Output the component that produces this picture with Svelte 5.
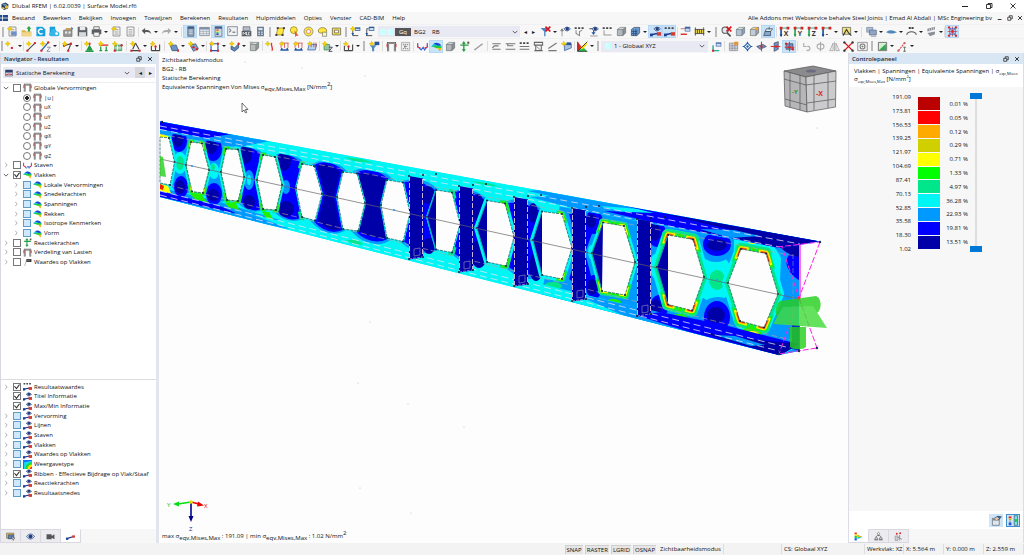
<script>
  const star = '<path d="M4 0l1.300 2.700L8 4 5.300 5.300 4 8 2.700 5.300 0 4l2.700-1.300z" fill="#f2d200" stroke="#c9a800" stroke-width=".4"/>';
  const redX = '<path d="M8 1l7 7M15 1L8 8" stroke="#d9141b" stroke-width="2.500"/>';
  const dots = (pts, c = '#d8262c') => pts.map(([x, y]) => `<circle cx="${x}" cy="${y}" r="1.700" fill="${c}"/>`).join('');
  const page = '<path d="M3 1.500h10v13H3z" fill="#fff" stroke="#666"/><path d="M5 5h6M5 7.500h6M5 10h6M5 12h6" stroke="#888"/>';
  const cube = (a, b, c) => `<path d="M2 5l4-3h8v8l-4 4H2z" fill="${a}"/><path d="M2 5h8v9H2z" fill="${b}"/><path d="M10 5l4-3v8l-4 4z" fill="${c}"/><path d="M2 5l4-3h8v8l-4 4H2zM2 5h8v9M10 5l4-3" fill="none" stroke="#566" stroke-width=".8"/>`;
  const frame = '<path d="M3 15V3h10v12" fill="none" stroke="#555" stroke-width="3"/><path d="M3 15V3h10v12" fill="none" stroke="#ddd"/><path d="M1.500 4v5M14.500 4v5" stroke="#d22" stroke-width="1.400"/>';
  const stress = '<path d="M0 8l5-5 6 1 5 4-4 2z" fill="#18c4ee"/><path d="M4 4c3-2 6-2 11 2l-5 1z" fill="#1a44d8"/><path d="M1 8c5-2 10-2 15 1l-3 2-5-1z" fill="#28c840"/><path d="M6 10h9l-1 2z" fill="#e8e800"/><path d="M10 11h5l-2 4z" fill="#f0a800"/>';
  const resultDot = '<path d="M0 14l5-2 6-1" stroke="#1a3f96" stroke-width="2.200" fill="none"/><path d="M0 11h4v4H0z" fill="#1a3f96"/><path d="M10 9h6v5h-6z" fill="#d73a2e"/>';
  const eye = '<path d="M6 4c2-3 6-3 9 0-3 4-7 4-9 0z" fill="#fff" stroke="#24417f" stroke-width="1.300"/><circle cx="10.500" cy="4" r="2.600" fill="#24417f"/>';
  const axes = (c, l) => `<path d="M3 14V3h11" stroke="#1db6a0" stroke-width="1.500" fill="none"/><path d="M3 15V4" stroke="${c}" stroke-width="2"/><path d="M1 1h4v4H1zM11 1h4v4h-4z" fill="#d22"/><path d="M1 12h4l-2 4z" fill="${c}"/><text x="7" y="15" font-size="10" font-weight="700" fill="#333">${l}</text>`;
  const load = '<path d="M2 4h12M8 4v7" stroke="#444" stroke-width="1.300"/><path d="M5 9h6l-3 4z" fill="#2458a8"/><path d="M3 14.500h11" stroke="#777"/>';
  const values = '<path d="M1 3h3M6 3h3M11 3h3" stroke="#444" stroke-width="2.600"/>';
  const grid = '<path d="M2 3h12v11H2z" fill="#bcd2ea" stroke="#456" /><path d="M2 7h12M2 10.500h12M6 3v11M10 3v11" stroke="#456"/>';

  const icons = {
    logo: '<path d="M1 4l8-3 6 4-1 8-8 3-5-4z" fill="#203a5f"/><path d="M2 5l6-2 5 3-6 2z" fill="#6f8fb5"/><circle cx="11" cy="10" r="3.500" fill="#e8b92d"/><path d="M1 12l4 3 3-2-4-3z" fill="#e7c96a"/>',
    project: '<path d="M0 2h16v12H0z" fill="#234a86"/><path d="M5 2v12M0 8h16" stroke="#fff" stroke-width="1.500"/>',
    newm: page + '<path d="M6 8h8v6H6z" fill="#6d93c4"/>' + star,
    open: '<path d="M1 6h5l1 2h8v7H1z" fill="#d9b24a"/><path d="M1 9h14v6H1z" fill="#f0d58a"/><path d="M10 8V4H8l3.500-4L15 4h-2v4z" fill="#2aa54a"/>',
    cblue: '<path d="M2 1h9l4 4v10H2z" fill="#18a0dc"/><path d="M11 5.500a3.500 3.500 0 1 0 0 5" stroke="#fff" stroke-width="2" fill="none"/>',
    cloud: '<path d="M1 1h8v9H1z" fill="#18a0dc"/><path d="M3 15a3 3 0 0 1 0-6 4 4 0 0 1 8-1 3.500 3.500 0 0 1 1 7z" fill="#35b5e8"/><circle cx="11" cy="11" r="2" fill="#fff"/>',
    tools: '<path d="M1 6h12v9H1z" fill="#9a9a9a" stroke="#666"/><path d="M3 8h3v3H3zM8 8h3v3H8z" fill="#eee"/><path d="M4 3h8v3H4z" fill="#c69b5d"/><path d="M12 1l3 3-3 3z" fill="#3774b8"/>',
    save: '<path d="M1 1h12l2 2v12H1z" fill="#606468"/><path d="M4 1h8v5H4z" fill="#e9ebee"/><path d="M3 9h10v6H3z" fill="#d6d9dd"/>',
    print: '<path d="M4 1h8v4H4z" fill="#eee" stroke="#555"/><path d="M1 5h14v7H1z" fill="#5b5f63"/><path d="M4 9h8v6H4z" fill="#f4f4f4" stroke="#555"/>',
    pagestar: page + star, page,
    undo: '<path d="M1 7l5-4v3c5-1 8 1 9 6-2-3-5-4-9-3v3z" fill="#555"/>',
    redo: '<path d="M15 7l-5-4v3c-5-1-8 1-9 6 2-3 5-4 9-3v3z" fill="#aaa"/>',
    win: '<path d="M4 1h9v14H4z" fill="#8fa0b5" stroke="#5a6675"/><path d="M4 1h9v3H4z" fill="#3f5f8a"/><path d="M6 6h5M6 8.500h5M6 11h5" stroke="#dfe6ee"/>',
    table: '<path d="M1 2h14v12H1z" fill="#e3e8ee" stroke="#6b7480"/><path d="M1 2h14v3H1z" fill="#7d8da3"/><path d="M1 8h14M1 11h14M6 5v9M11 5v9" stroke="#a3adb9"/>',
    ctrl: '<path d="M3 1h10v14H3z" fill="#cfd9e4" stroke="#5a6675"/><path d="M3 1h10v3H3z" fill="#3f5f8a"/><path d="M5 5h3v2H5z" fill="#e33"/><path d="M5 7h3v2H5z" fill="#ee0"/><path d="M5 9h3v2H5z" fill="#1c4"/><path d="M5 11h3v2H5z" fill="#22d"/>',
    console: '<path d="M1 1h14v13H1z" fill="#eef1f5" stroke="#5f6975"/><path d="M3 4l3 2.500L3 9M8 9h4" stroke="#444" fill="none" stroke-width="1.300"/>',
    msc: '<path d="M3 1h10v6H3z" fill="#b4bcc8" stroke="#667"/><path d="M1 7h14v8H1z" fill="#565d66"/><path d="M3 13V9l2 2 2-2v4M9 9h-1v4h2M13 9h-2v4h2" stroke="#fff" fill="none"/>',
    calc: '<path d="M3 1h10v14H3z" fill="#6c7d93"/><path d="M5 3h6v3H5z" fill="#dce8f2"/><path d="M5 8h2v2H5zM9 8h2v2H9zM5 11h2v2H5zM9 11h2v2H9z" fill="#d8dde4"/>',
    selpoly: '<path d="M4 3h9l-2 10H2z" fill="#ffe640" stroke="#8a7a10"/>' + dots([[4, 3], [13, 3], [2, 13], [11, 13]], '#444'),
    selcirc: '<circle cx="7" cy="6" r="5" fill="#ffe640" stroke="#8a7a10"/><path d="M8 6l6 8-3 0-2 2z" fill="#d9603a"/>',
    selring: '<circle cx="8" cy="8" r="6.500" fill="#ffe640" stroke="#777"/><circle cx="8" cy="8" r="3" fill="#fff" stroke="#c66"/>',
    selfree: '<path d="M2 7c0-6 11-6 12-1 0 4-2 6-6 4-4 1-6 0-6-3z" fill="#ffe640" stroke="#7a6a10"/><path d="M8 9h6v6H8z" fill="#f6f6c0" stroke="#777"/>',
    selbox: '<path d="M2 3h12v10H2z" fill="#ffe640" stroke="#555"/><path d="M5 6h6v4H5z" fill="#fff" stroke="#555"/>',
    lcnew: '<path d="M4 6v8M4 14h8" stroke="#444" stroke-width="1.300"/><path d="M2 10h4l-2 4z" fill="#2458a8"/><path d="M7 2h8v5H7z" fill="#2c5796"/><path d="M8 4h6v2H8z" fill="#cfe0f4"/>' + star,
    lc: '<path d="M4 4v10M4 4h3M3 14h9" stroke="#444" stroke-width="1.300"/><path d="M2 10h4l-2 4z" fill="#2458a8"/><path d="M7 1h8v6H7z" fill="#2c5796"/><path d="M8 3h6v3H8z" fill="#cfe0f4"/>',
    filterx: '<path d="M1 3h12L8 8v7H6V8z" fill="#4a86c5"/>' + redX,
    eyesup: '<path d="M3 5v10M1 7l2-3 2 3z" stroke="#777" fill="#777"/>' + eye,
    values2: values + '<path d="M3 6v5l5 3V8l4-2" stroke="#888" fill="none" stroke-width="1.500"/>',
    eyeload: load + eye,
    valload: values + '<path d="M3 6v7h11" stroke="#999" fill="none" stroke-width="1.500"/>',
    greycube: cube('#d8dadc', '#b5b8bb', '#8d9195'),
    bluecube: '<path d="M2 5l4-3h8v8l-4 4H2z" fill="#6d9ad0" stroke="#345"/><path d="M2 8h8M2 11h8M5 5v9M8 5v9M10 5v9" stroke="#274a78"/>',
    eyeres: resultDot + eye, valres: resultDot + values,
    slice: '<path d="M1 4h13" stroke="#a44"/><path d="M7 1h8v7H7z" fill="#4268a8"/><path d="M8 4h6v3H8z" fill="#cfe0f4"/><path d="M1 12h9" stroke="#d22" stroke-width="2"/>',
    barrier: '<path d="M1 5h14v6H1z" fill="#e8d34a"/><path d="M1 5h14M1 11h14M2 2v12M8 5v6M14 2v12M5 5v6M11 5v6" stroke="#444" stroke-width="1.200"/>',
    zoomx: '<circle cx="6" cy="6" r="4.500" fill="#dce9f7" stroke="#555" stroke-width="1.500"/><path d="M9 10l5 5" stroke="#555" stroke-width="2.500"/>' + redX,
    cube1: cube('#e4e9f0', '#b5c1d4', '#8f9fb8'),
    cube2: cube('#f4dba0', '#c2cbd8', '#97a4b6') + '<path d="M9 1l5 3-4 3z" fill="#f0a63a"/>',
    cube3: '<path d="M5 4h9l-3 4H3z" fill="#e0e8f2" stroke="#345"/><path d="M3 8h8v6H1z" fill="#8ba6cc" stroke="#345"/><path d="M9 1v4" stroke="#345"/>',
    ax: axes('#1a3f96', 'X'), ay: axes('#26a14a', 'Y'), az: axes('#26a14a', 'Z'), axx: axes('#1a3f96', '-'),
    person: '<path d="M2 2h12v10H2z" fill="#f1e27a" stroke="#555"/><path d="M3 14l5-9 3 5 4 4" stroke="#333" fill="none" stroke-width="1.500"/>',
    solids: '<path d="M1 2h9v7H1z" fill="#a9bcd6" stroke="#789"/><path d="M5 6h10v7H5z" fill="#8ca5c8" stroke="#667"/><path d="M7 15h8" stroke="#789"/>',
    plane: '<path d="M0 9c4-4 9-4 16 0-5 2-10 3-16 0z" fill="#4b87b9"/>',
    dim: '<path d="M1 13c1-6 13-6 14 0" stroke="#555" fill="none" stroke-width="1.500"/><path d="M4 3h8" stroke="#444" stroke-width="3" stroke-dasharray="3 1"/>',
    ruler: '<path d="M2 4l11-3v4L2 8zM2 10l11-2v4L6 15z" fill="#8c9096"/><path d="M5 4v4M8 3v4M11 2v4" stroke="#ddd"/>',
    mesh: '<path d="M3 2l10 12M13 2L3 14M8 1v14M1 8h14" stroke="#c33"/><path d="M4 4h8v8H4z" fill="none" stroke="#36c" stroke-width="1.200"/>' + dots([[3, 2], [13, 2], [3, 14], [13, 14], [8, 8]]),
    node: star + dots([[10, 10]]),
    line: '<path d="M2 14L13 3" stroke="#444" stroke-width="1.500"/>' + dots([[2, 14], [13, 3]]) + star,
    line2: '<path d="M2 14L12 2" stroke="#2458a8" stroke-width="1.800"/>' + dots([[2, 14], [12, 2]]) + '<path d="M10 9h5l-5 6h5" stroke="#668" fill="none"/>' + star,
    polyl: '<path d="M3 7L13 4 9 14" stroke="#444" stroke-width="1.700" fill="none"/>' + dots([[3, 7], [13, 4], [9, 14]]) + star,
    sup: '<path d="M8 5l5 9H3z" fill="#1f9a45"/>' + dots([[8, 4]]) + '<path d="M2 15h12" stroke="#1f9a45" stroke-width="2"/>' + star,
    member: '<path d="M2 6h13" stroke="#d33" stroke-width="2"/><path d="M4 8v6M12 8v6M2 14h4M10 14h4" stroke="#1f9a45" stroke-width="1.800"/>' + star,
    memgrp: '<path d="M4 6h10v8H4z" fill="#8cc59d" stroke="#27864a"/><path d="M4 10h10M8 6v8" stroke="#fff"/>' + dots([[4, 14], [14, 6]]) + star,
    hinge: '<path d="M2 14h12M8 3L4 12M8 3l5 9" stroke="#444" stroke-width="1.600"/>' + dots([[2, 14], [14, 14]]) + star,
    hinge2: '<path d="M2 14V7M8 14V9M14 14V5M2 14h12" stroke="#444" stroke-width="1.600"/>' + dots([[8, 8]]) + star,
    surf: '<path d="M3 6h9l3 8H6z" fill="#6c94c8" stroke="#345"/>' + dots([[15, 14]]) + star,
    surf2: '<path d="M3 6l8-2 4 7-7 4z" fill="#7ea3cf" stroke="#345"/>' + dots([[8, 9], [13, 12]]) + star,
    opening: '<path d="M3 4h10v10H3z" fill="#fff" stroke="#2458a8" stroke-width="1.600"/>' + dots([[3, 4], [13, 4], [3, 14], [13, 14]]) + star,
    solid: '<path d="M3 7l5 3 6-6v6l-6 5-5-3z" fill="#5d87bd" stroke="#345"/>' + dots([[14, 4]]) + star,
    box: cube('#ddd', '#bbb', '#999') + '<path d="M1 1h5v3H1z" fill="#aaa"/>',
    imper: '<path d="M10 3c-3 3 3 6 0 11" stroke="#d33" stroke-width="2" fill="none"/>' + star,
    lload: '<path d="M3 3v7M8 3v7M13 3v7M2 3h12" stroke="#c33"/><path d="M2 13h12M4 10v3M12 10v3" stroke="#2458a8" stroke-width="2"/>' + star,
    sload: '<path d="M3 5h11l-2 8H1z" fill="#bcd2ea" stroke="#2458a8"/><path d="M6 2v7M10 2v7M13 2v7" stroke="#c33"/>' + star,
    hload: '<path d="M3 5h8v8H3z" fill="#9bc1a4" stroke="#27864a"/><path d="M10 9h5l-5 6h5" stroke="#446" fill="none" stroke-width="1.400"/>' + star,
    filter: '<path d="M1 6h10L7.500 10v5h-3v-5z" fill="#4a86c5"/><path d="M8 1h7v5H8z" fill="#2c5796"/>' + star,
    frame,
    film: '<path d="M2 2h12v12H2z" fill="#f2f2f2" stroke="#999"/><path d="M4 5h8M4 11h8" stroke="#999" stroke-width="2" stroke-dasharray="2 1"/><path d="M6 6l5 2-5 2z" fill="#888"/>',
    moment: '<path d="M1 3v5l5 5 3-4 2 4 4-5V3" stroke="#3468d8" fill="none" stroke-width="1.600"/><path d="M1 5v4l4 1M15 5v4l-4 1" stroke="#e33" stroke-width="1.600" fill="none"/>',
    stress,
    supres: '<path d="M7 2v12M2 6h12" stroke="#27a045" stroke-width="2"/><path d="M4 4l3-4 3 4zM4 12h6l-3 4z" fill="#27a045"/><path d="M12 1h3v3h-3z" fill="#555"/>',
    stroke: '<path d="M2 13L14 4" stroke="#999" stroke-width="2"/>',
    sec1: '<path d="M2 4h12M2 12h12M2 10l3-3h6" stroke="#777" stroke-width="1.800" fill="none"/>',
    sec2: '<path d="M1 4h14M1 12h14M4 4v3h8" stroke="#777" stroke-width="1.600" fill="none"/>',
    sec3: values + '<path d="M1 8h14M1 12h14" stroke="#777" stroke-width="1.600"/>',
    sec4: '<path d="M2 2h12v4H2zM4 6v7M12 6v7M2 14h12" stroke="#666" fill="none" stroke-width="1.500"/><path d="M5 8l6 5" stroke="#666"/>',
    sec5: '<path d="M2 11L14 3M2 14h12" stroke="#777" stroke-width="1.700"/>',
    cutstar: '<path d="M5 5h10v5L5 14z" fill="#a9c1e0" stroke="#2c5796"/><path d="M8 2h7v4H8z" fill="#2c5796"/>' + star,
    iso: '<path d="M1 15L15 1v14z" fill="#fff"/><path d="M1 15h14l-6-6z" fill="#1cc44a"/><path d="M1 1v14l6-6z" fill="#e22"/><path d="M4 11L14 1v5l-6 6z" fill="#ffd800"/><path d="M1 1v14h14M1 15L15 1" stroke="#333" stroke-width="1.300" fill="none"/>',
    csys: '<path d="M3 14V6M3 14h9" stroke="#2a9" stroke-width="2"/><path d="M7 2h8v6H7z" fill="#4268a8"/><path d="M8 4h6v3H8z" fill="#cfe0f4"/>' + dots([[3, 14]]),
    gridset: '<path d="M2 3h12v11H2z" fill="#d4d8de" stroke="#888" /><path d="M2 7h12M2 10.500h12M6 3v11M10 3v11" stroke="#889"/><path d="M9 1h6v5H9z" fill="#e8963a"/>',
    snap: '<path d="M8 1v14M1 8h14" stroke="#2458a8" stroke-width="1.700"/><path d="M8 3l5 5-5 5-5-5z" fill="#fff" stroke="#2458a8" stroke-width="1.500"/>' + dots([[8, 8]], '#2458a8'),
    wp1: '<path d="M1 8l9-3 5 3-9 4z" fill="#6f95cc" stroke="#345"/><path d="M8 1v14" stroke="#d33" stroke-width="1.600"/>' + dots([[8, 8]]),
    wp2: '<path d="M6 3l6-2v11l-6 3z" fill="#6f95cc" stroke="#345"/><path d="M1 8h14" stroke="#d33" stroke-width="1.600"/>' + dots([[9, 8]]),
    wp3: '<path d="M3 4h10v8H3z" fill="#6f95cc" stroke="#345"/><path d="M1 9h14M8 1v14" stroke="#d33" stroke-width="1.600"/>' + dots([[8, 9], [3, 4], [13, 12]]),
    rot: '<path d="M4 3v5h4M9 8a3 3 0 1 1-1 5" stroke="#aaa" fill="none" stroke-width="1.600"/>',
    rot2: '<path d="M3 8c0-5 10-5 10 0s-10 5-10 0M8 1v14" stroke="#aaa" fill="none" stroke-width="1.600"/>',
    mirror: '<path d="M6 3v11H1zM10 3v11h5z" fill="#eee" stroke="#999"/><path d="M8 1v14" stroke="#999"/>',
    del: '<path d="M2 2l12 12M14 2L2 14" stroke="#d9141b" stroke-width="2"/>' + dots([[2, 2], [14, 2], [2, 14], [14, 14]], '#333'),
    snapshot: '<path d="M1 2h14v12H1z" fill="#eee" stroke="#777"/><circle cx="8" cy="8" r="3.500" fill="#fff" stroke="#777" stroke-width="1.500"/><circle cx="8" cy="8" r="1.500" fill="#777"/>',
    chart: '<path d="M2 2h12v12H2z" fill="#d5f0d0" stroke="#444"/><path d="M3 13L13 4v9z" fill="#2fa84f"/>',
    guide: '<path d="M2 14L11 3" stroke="#c44" stroke-width="1.500" stroke-dasharray="3 1"/><path d="M11 9v6M9 9h4M9 15h4" stroke="#444"/>' + dots([[2, 14], [11, 3]], '#c66'),
    flagval: '<path d="M3 14L6 4" stroke="#777"/><path d="M6 2h9v5H6z" fill="#333"/><path d="M7.500 4.500h6" stroke="#ccc" stroke-dasharray="1 1"/>',
    rainbow: '<path d="M0 0h16v16H0z" fill="#1670ff"/><path d="M2 16A14 14 0 0 1 16 2v14z" fill="#10e0e8"/><path d="M2 16V4l12-2h2v14z" fill="#10e0e8"/><path d="M4 16A12 12 0 0 1 16 4v12z" fill="#1cd830"/><path d="M8 16a8 8 0 0 1 8-8v8z" fill="#ffe600"/><path d="M12 16a4 4 0 0 1 4-4v4z" fill="#f33"/>',
    calcres: '<path d="M1 2h14v12H1z" fill="#cdd6e4" stroke="#345"/><path d="M1 2h14v5H1z" fill="#29416e"/><path d="M2 12l5-2 7 1" stroke="#d33" stroke-width="2" fill="none"/>',
    navdata: '<path d="M1 2h13v9H1z" fill="#f0c53d" stroke="#555"/><path d="M4 5h9v7H4z" fill="#5687c6" stroke="#335"/><path d="M9 8l4 7 1-3 2-1z" fill="#e8e8e8" stroke="#444"/>',
    eyetab: '<path d="M1 8c4-6 10-6 14 0-4 6-10 6-14 0z" fill="#cfdcf0" stroke="#24417f" stroke-width="1.200"/><circle cx="8" cy="8" r="3.500" fill="#24417f"/>',
    camera: '<path d="M1 4h9v9H1zM10 7l5-3v9l-5-3z" fill="#555"/>',
    restab: '<path d="M1 12l6-2 7-2" stroke="#1a3f96" stroke-width="2" fill="none"/><path d="M0 10h4v4H0z" fill="#1a3f96"/><path d="M11 6h5v4h-5z" fill="#d73a2e"/>',
    scaletab: '<path d="M1 1h4v3H1z" fill="#e22"/><path d="M1 4h4v3H1z" fill="#fd0"/><path d="M1 7h4v4H1z" fill="#1c4"/><path d="M1 11h4v4H1z" fill="#25e"/><path d="M6 5l9 4-9 4z" fill="#2bd1b4"/><path d="M6 5l9 4H6z" fill="#f4b400"/>',
    balance: '<path d="M8 4v3M4 8a5 5 0 0 1 8 0" stroke="#666" fill="none" stroke-width="1.500"/><circle cx="8" cy="3" r="2" fill="#fff" stroke="#666"/><path d="M1 13l3-5 3 5zM9 13l3-5 3 5z" fill="#ddd" stroke="#666" stroke-width="1.200"/><path d="M1 14h6M9 14h6" stroke="#666" stroke-width="1.500"/>',
    factor: '<path d="M2 7h5v8H2z" fill="#ccc" stroke="#888"/><path d="M10 5v10M7 9l7 4" stroke="#888" stroke-width="1.500"/>' + dots([[5, 3], [11, 2]]),
    hand: '<path d="M2 5h10v10H2z" fill="#e2e6ea" stroke="#567"/><path d="M2 5h10v3H2z" fill="#888"/><path d="M5 4l5-3 6 1-4 5-5 1z" fill="#3b5f8f"/><path d="M5 5l4-2 3 2-4 3z" fill="#e9c7a8"/>',
    bars: '<path d="M1 2h4v3H1z" fill="#e22"/><path d="M1 5h4v2H1z" fill="#fd0"/><path d="M1 11h4v4H1z" fill="#25e"/><path d="M3 6v5" stroke="#333" stroke-dasharray="2 1"/><path d="M9 1h5v14H9z" fill="#7fe0ea" stroke="#356"/><path d="M10 6h3v4h-3z" fill="#1c4"/>'
  };

  // Toolbar entries: icon name, "*" prefix = switched on, "v" = menu arrow, "|n" = separator n px wide, ":n" = grip n px wide
  const split = (s) => s.trim().split(/\s+/);
  const bar1a = split(':5 newm open cblue cloud tools save print v pagestar page |2 undo v redo v |4 *win table *ctrl console msc calc :6 selpoly selcirc selring selfree selbox :5 lcnew lc');
  const bar1b = split('filterx v eyesup values2 eyeload valload greycube bluecube v *eyeres *valres |2 slice barrier v :7 zoomx cube1 cube2 *cube3 |2 ax ay az axx v person v |5 solids v plane v dim v ruler v |1 *mesh');
  const bar2a = split(':3 node v |1 line line2 v |2 polyl v |2 sup member memgrp |4 hinge v hinge2 |4 surf v surf2 v |1 opening v solid v box |2 imper lload lload sload |1 hload v |1 hinge2 v :6 filter |3 frame film |3 moment *stress greycube supres stroke |4 sec1 sec2 sec3 sec4 sec5 cutstar |2 iso v :6');
  const bar2b = split('csys |3 gridset snap wp1 wp2 *wp3 |3 rot rot2 mirror del snapshot :6 chart v guide v');

  const menu = ['Bestand', 'Bewerken', 'Bekijken', 'Invoegen', 'Toewijzen', 'Berekenen', 'Resultaten', 'Hulpmiddelen', 'Opties', 'Venster', 'CAD-BIM', 'Help'];

  const tree = [
    { t: 'Globale Vervormingen', i: 'frame', open: true },
    ...['|u|', 'uX', 'uY', 'uZ', 'φX', 'φY', 'φZ'].map((t, n) => ({ t, i: 'frame', d: 1, radio: true, on: n === 0 })),
    { t: 'Staven', i: 'moment' },
    { t: 'Vlakken', i: 'stress', open: true, on: true },
    ...['Lokale Vervormingen', 'Snedekrachten', 'Spanningen', 'Rekken', 'Isotrope Kenmerken', 'Vorm'].map((t) => ({ t, i: 'stress', d: 1, blue: true })),
    { t: 'Reactiekrachten', i: 'supres' },
    { t: 'Verdeling van Lasten', i: 'frame' },
    { t: 'Waardes op Vlakken', i: 'flagval' }
  ];
  const display = [
    { t: 'Resultaatwaardes', i: 'valres', on: true },
    { t: 'Titel Informatie', i: 'eyeres', on: true, leaf: true },
    { t: 'Max/Min Informatie', i: 'eyeres', on: true, leaf: true },
    { t: 'Vervorming', i: 'eyeres', blue: true },
    { t: 'Lijnen', i: 'eyeres', blue: true },
    { t: 'Staven', i: 'eyeres', blue: true },
    { t: 'Vlakken', i: 'eyeres', blue: true },
    { t: 'Waardes op Vlakken', i: 'eyeres', blue: true },
    { t: 'Weergavetype', i: 'rainbow', blue: true },
    { t: 'Ribben - Effectieve Bijdrage op Vlak/Staaf', i: 'eyeres', on: true },
    { t: 'Reactiekrachten', i: 'eyeres', blue: true },
    { t: 'Resultaatsnedes', i: 'eyeres', blue: true }
  ];

  const limits = ['191.09', '173.81', '156.53', '139.25', '121.97', '104.69', '87.41', '70.13', '52.85', '35.58', '18.30', '1.02'];
  const bands = [
    ['#bb0000', '0.01 %'], ['#ff0000', '0.05 %'], ['#ffaa00', '0.12 %'], ['#d0d000', '0.29 %'], ['#ffff00', '0.71 %'], ['#00ff00', '1.33 %'],
    ['#00e68a', '4.97 %'], ['#00f5f5', '36.28 %'], ['#0099ff', '22.93 %'], ['#0000ff', '19.81 %'], ['#0000a8', '13.51 %']
  ];

  // Web openings: left, top-left, top-right, right, bottom-right, bottom-left
  const holes = [
    [[150, 160], [155, 136], [169, 138], [174.5, 162], [170, 185], [155, 181]],
    [[186, 165], [191, 142], [202, 143.5], [209, 170], [203, 193], [192, 191.5]],
    [[221, 172], [226, 149], [238, 149.5], [244, 177], [238, 201], [227, 200]],
    [[257, 180], [263, 155], [275, 157], [282, 185], [276, 210], [263, 209]],
    [[296, 188], [302, 164], [314, 166], [322, 194], [315, 220.5], [302, 217]],
    [[337, 197], [343, 172], [357, 173.5], [365, 203], [358, 231], [343, 229]],
    [[381, 205], [387, 180], [403, 182.5], [410, 213], [403, 241.5], [387, 238]],
    [[427, 217], [436, 190], [452, 192.5], [460, 224], [452, 252.5], [436, 249.5]],
    [[477, 228], [487, 200.5], [505, 203.5], [514, 237], [506, 266], [487, 262]],
    [[533, 240], [542, 211.5], [562, 214], [572, 248], [562, 279], [542, 275]],
    [[592, 253], [603, 222.5], [624, 226], [635, 262], [625, 295], [602, 291]],
    [[657, 267], [668, 235], [693, 239.5], [704, 277], [692, 310.5], [668, 304.5]],
    [[728, 283], [741, 249], [766, 253.5], [778, 294], [764, 327.5], [740, 321]]
  ];
  const pts = (p) => p.map((q) => q.join(',')).join(' ');
  const post = (n, inset, bulge) => {
    const a = holes[n], b = holes[n + 1];
    const p = (q, dx) => `${q[0] + dx} ${q[1]}`;
    const m = (a[2][0] + b[1][0]) / 2;
    return `M${p(a[2], inset)}L${p(a[3], inset)}L${p(a[4], inset)}Q${m} ${(a[4][1] + b[5][1]) / 2 + bulge} ${p(b[5], -inset)}L${p(b[0], -inset)}L${p(b[1], -inset)}Q${m} ${(a[2][1] + b[1][1]) / 2 - bulge} ${p(a[2], inset)}z`;
  };
  // Short bent line that hugs corner k of an opening; f = share of each adjoining edge
  const corner = (h, k, f) => {
    const to = (q) => `${h[k][0] + (q[0] - h[k][0]) * f} ${h[k][1] + (q[1] - h[k][1]) * f}`;
    return `M${to(h[k - 1])}L${h[k][0]} ${h[k][1]}L${to(h[(k + 1) % 6])}`;
  };
  const ribs = [[409, 176, 83], [459, 186, 86], [514, 197, 89], [572, 208, 93], [637, 219, 97]];
  const C = { n: '#0000a8', b: '#0000ff', a: '#0099ff', c: '#00f5f5', t: '#00e68a', g: '#22f000', y: '#ffff00', o: '#ffaa00', r: '#ee2000' };
  const posts = [
    [0, 'a', 0, 10], [1, 'a', 0, 10], [2, 'a', -2, 12], [2, 'b', 2, 9], [3, 'a', -4, 14], [3, 'b', 0, 11], [4, 'a', -5, 17], [4, 'b', -2, 13], [4, 'n', 3, 8],
    [5, 'a', -7, 19], [5, 'b', -3, 13], [5, 'n', 1, 5], [6, 'a', -3, 14], [6, 'b', 1, 8], [7, 'a', -2, 14], [7, 'b', 1, 9], [8, 'a', -2, 16], [8, 'b', 1, 7],
    [9, 'a', -2, 18], [9, 'b', 7, 5], [10, 'a', -2, 18], [11, 'a', -2, 18]
  ];
  const blobs = [
    ['b', 179, 141, 8, 11], ['n', 178, 140, 5, 7], ['b', 181, 187, 7, 11], ['n', 180, 187, 5, 7], ['c', 180, 163, 7, 11], ['t', 180, 163, 4, 7],
    ['b', 213, 149, 9, 12], ['n', 211, 147, 6, 7], ['b', 214, 194, 8, 11], ['n', 213, 195, 6, 6], ['c', 214, 171, 5, 8], ['t', 213, 167, 2, 3],
    ['n', 246, 154, 6, 10], ['n', 249, 202, 6, 7], ['a', 249, 180, 5, 10], ['c', 249, 180, 2, 5],
    ['n', 284, 161, 7, 10], ['n', 286, 209, 8, 8], ['a', 286, 187, 4, 7],
    ['n', 428, 195, 7, 9], ['n', 429, 246, 6, 8], ['n', 478, 208, 6, 14], ['n', 479, 254, 8, 14], ['n', 533, 213, 5, 10], ['n', 536, 267, 7, 14],
    ['b', 594, 222, 9, 12], ['n', 591, 221, 5, 7], ['b', 594, 287, 8, 12], ['n', 592, 287, 5, 8], ['c', 591, 252, 3, 7],
    ['b', 657, 234, 9, 13], ['n', 655, 232, 5, 9], ['b', 659, 307, 9, 12], ['n', 656, 307, 5, 8], ['c', 655, 266, 5, 12],
    ['c', 714, 278, 19, 24], ['a', 716, 242, 20, 20], ['a', 718, 318, 22, 21], ['c', 717, 280, 12, 15], ['b', 717, 244, 14, 12], ['n', 717, 245, 10, 6], ['b', 717, 317, 13, 16], ['n', 716, 315, 9, 8], ['t', 717, 280, 8, 10]
  ];
  // Stress fringes along corners: opening, corners, peak colour, reach
  const fringes = [
    [1, [1, 2, 4, 5], 'y', .3], [2, [1, 4, 5], 'g', .3], [3, [1, 4, 5], 'g', .25], [4, [1, 5], 't', .2], [7, [2, 4], 't', .2],
    [8, [2, 4], 'g', .3], [9, [2, 4], 'y', .28], [10, [1, 2, 4, 5], 'y', .35], [11, [1, 2, 4, 5], 'r', .38], [12, [1, 2, 4, 5], 'r', .4]
  ];
  const order = ['t', 'g', 'y', 'o', 'r'];
  const specks = [[245, 62], [302, 68], [365, 76], [370, 322], [358, 383], [408, 404], [464, 427], [360, 488], [411, 513], [817, 128]];
</script>

{#snippet icon(name)}
  <svg class="ic" viewBox="0 0 16 16" aria-hidden="true">{@html icons[name]}</svg>
{/snippet}

{#snippet tools(list)}
  {#each list as e}
    {#if e === 'v'}
      <button class="caret" aria-label="Menu"></button>
    {:else if e[0] === '|'}
      <span class="sep" style="width:{e.slice(1)}px"></span>
    {:else if e[0] === ':'}
      <span class="grip" style="width:{e.slice(1)}px"></span>
    {:else}
      <button class="tool" class:on={e[0] === '*'} aria-label={e.replace('*', '')}>{@render icon(e.replace('*', ''))}</button>
    {/if}
  {/each}
{/snippet}

{#snippet chevron(open)}
  <svg class="chev" viewBox="0 0 8 8" aria-hidden="true"><path d={open ? 'M1 2.500l3 3 3-3' : 'M3 1l2.500 3L3 7'} fill="none" stroke={open ? '#333' : '#999'} stroke-width="1" /></svg>
{/snippet}

{#snippet rows(list, group)}
  {#each list as r}
    <li class:deep={r.d}>
      <span class="tw">{#if !r.leaf && !r.radio}{@render chevron(r.open)}{/if}</span>
      <label>
        {#if r.radio}
          <input type="radio" name={group} checked={r.on} />
        {:else}
          <input type="checkbox" class:blue={r.blue} checked={r.on} />
        {/if}
        {@render icon(r.i)}
        <span>{#if r.radio && r.t.length === 2}{r.t[0]}<small>{r.t[1]}</small>{:else}{r.t}{/if}</span>
      </label>
    </li>
  {/each}
{/snippet}

{#snippet panelButtons()}
  <button class="pb" aria-label="Losmaken"><svg viewBox="0 0 8 8"><path d="M1 3h4v4H1zM3 3V1h4v4H5" fill="none" stroke="#222" /></svg></button>
  <button class="pb" aria-label="Sluiten"><svg viewBox="0 0 8 8"><path d="M1.500 1.500l5 5M6.500 1.500l-5 5" stroke="#222" stroke-width="1.200" /></svg></button>
{/snippet}

<div class="app">
  <header class="title">
    {@render icon('logo')}
    <h1>Dlubal RFEM | 6.02.0039 | Surface Model.rf6</h1>
    <div class="wins">
      <button aria-label="Minimaliseren"><svg viewBox="0 0 8 8"><path d="M1 4.500h6" stroke="#222" /></svg></button>
      <button aria-label="Herstellen"><svg viewBox="0 0 8 8"><path d="M1.500 2.500h4v4h-4zM3 2.500v-1h4v4H5.500" fill="none" stroke="#222" stroke-width=".9" /></svg></button>
      <button aria-label="Afsluiten"><svg viewBox="0 0 8 8"><path d="M1.500 1.500l5 5M6.500 1.500l-5 5" stroke="#222" stroke-width=".9" /></svg></button>
    </div>
  </header>

  <nav class="menu">
    {@render icon('project')}
    {#each menu as m}<button>{m}</button>{/each}
    <span class="licence">Alle Addons met Webservice behalve Steel Joints | Emad Al Abdali | MSc Engineering bv</span>
    <button class="pb" aria-label="Venster minimaliseren"><svg viewBox="0 0 8 8"><path d="M1 6h5" stroke="#222" stroke-width="1.200" /></svg></button>
    {@render panelButtons()}
  </nav>

  <div class="bar">
    {@render tools(bar1a)}
    <div class="combo case">
      <i class="sw"></i><i class="sw"></i><b>Gq</b><span class="bg">BG2</span><span>RB</span>
      <button class="drop" aria-label="Belastingsgeval kiezen">{@render chevron(true)}</button>
      <button class="step" aria-label="Vorige">◂</button><button class="step" aria-label="Volgende">▸</button>
    </div>
    {@render tools(bar1b)}
  </div>
  <div class="bar">
    {@render tools(bar2a)}
    <div class="combo coord">
      <i class="sw"></i><span>1 - Globaal XYZ</span>
      <button class="drop" aria-label="Coördinatensysteem kiezen">{@render chevron(true)}</button>
    </div>
    {@render tools(bar2b)}
  </div>

  <div class="work">
    <aside class="nav">
      <div class="cap"><h2>Navigator - Resultaten</h2>{@render panelButtons()}</div>
      <div class="combo calc">
        {@render icon('calcres')}<span>Statische Berekening</span>
        <button class="drop" aria-label="Berekening kiezen">{@render chevron(true)}</button>
        <button class="step grey" aria-label="Vorige">◂</button><button class="step" aria-label="Volgende">▸</button>
      </div>
      <ul class="tree top">{@render rows(tree, 'deformation')}</ul>
      <ul class="tree bottom">{@render rows(display, 'display')}</ul>
      <div class="tabs">
        <button aria-label="Data">{@render icon('navdata')}</button>
        <button aria-label="Weergave">{@render icon('eyetab')}</button>
        <button aria-label="Aanzichten">{@render icon('camera')}</button>
        <button class="cur" aria-label="Resultaten">{@render icon('restab')}</button>
      </div>
    </aside>

    <main class="view">
      <svg class="scene" viewBox="159 53 689 490" preserveAspectRatio="xMinYMin meet" role="img" aria-label="Raatligger met equivalente spanningen">
        <defs>
          <clipPath id="beam"><path d="M160 121.500L820 241.500 799 245V351L779 355 160 197z" /></clipPath>
        </defs>
        {#each specks as [x, y]}<circle cx={x} cy={y} r=".6" fill="#bbb" />{/each}
        <g clip-path="url(#beam)">
          <path d="M160 120H825V356H160z" fill={C.c} />
          <path d="M640 210H825V356H640z" fill={C.a} />
          <path d="M560 205L660 224 700 262 640 330 540 300z" fill={C.a} />
          <path d="M150 120h60l50 22-40 7-60-12z" fill={C.a} />
          <path d="M150 185l70 17 60 18-20 8-110-30z" fill={C.a} />
          {#each posts as [n, c, k, bulge]}<path d={post(n, k, bulge)} fill={C[c]} />{/each}
          {#each blobs as [c, x, y, rx, ry]}<ellipse cx={x} cy={y} {rx} {ry} fill={C[c]} />{/each}
          <path d="M734 240c22-12 40 2 47 18l-2 46-14 28c-14 6-30 0-32-14z" fill={C.c} />
          {#each holes as h, n}
            <polygon points={pts(h)} fill="none" stroke={C.c} stroke-width={n > 10 ? 12 : n > 7 ? 6 : n < 4 ? 5 : 2} stroke-linejoin="round" />
          {/each}
          {#each [1, 2, 3, 10, 11, 12] as n}
            <polygon points={pts(holes[n])} fill="none" stroke={C.t} stroke-width={n > 10 ? 6 : 2} stroke-linejoin="round" />
          {/each}
          {#each [10, 11, 12] as n}
            <path d="M{holes[n][1]}L{holes[n][2]}M{holes[n][4]}L{holes[n][5]}" stroke={C.t} stroke-width={n > 10 ? 12 : 8} stroke-linecap="round" />
            <path d="M{holes[n][1]}L{holes[n][2]}M{holes[n][4]}L{holes[n][5]}" stroke={C.g} stroke-width={n > 10 ? 7 : 4} stroke-linecap="round" />
          {/each}
          {#each fringes as [n, ks, peak, f]}
            {#each ks as k}
              {#each order.slice(0, order.indexOf(peak) + 1) as c, j}
                <path d={corner(holes[n], k, f - j * .05)} fill="none" stroke={C[c]} stroke-width={(n > 10 ? 9 : n === 10 ? 7 : 6) - j * (n > 10 ? 1.7 : 2)} stroke-linejoin="round" />
              {/each}
            {/each}
          {/each}
          <path d="M190 194l10-1 8 10h-9zM225 203l10-1 5 9h-8zM262 212h7l5 9h-6z" fill={C.g} />
          <path d="M160 134l8 2 3 4-11-2zM160 184l8 2 4 10-12-2z" fill={C.y} />
          <path d="M160 184l4 2-1 4-3-1z" fill={C.r} />
          <path d="M740 332c6-8 18-6 22 2l6 12h-22z" fill={C.g} /><ellipse cx="752" cy="335" rx="7" ry="4" fill={C.y} />
          <ellipse cx="679" cy="319" rx="9" ry="5" fill={C.g} /><ellipse cx="679" cy="320" rx="3" ry="2" fill={C.y} />
          <ellipse cx="553" cy="286" rx="9" ry="4" fill={C.t} /><ellipse cx="613" cy="302" rx="8" ry="3" fill={C.g} />
          <ellipse cx="754" cy="242" rx="6" ry="2" fill={C.y} />
          <path d="M799 246c-10 4-14 14-12 20 3 8 8 12 12 14z" fill={C.b} />
          <path d="M780 247l20-2v12c-8-1-14-4-20-10z" fill={C.n} />
          <!-- top flange -->
          <path d="M160 121L820 241 780 248 160 131z" fill={C.c} />
          <path d="M160 121l110 20-30 6-80-16z" fill={C.a} />
          <path d="M160 121l72 13-26 4-46-9z" fill={C.b} />
          <path d="M540 190l280 51-40 7-200-38-70-18z" fill={C.a} />
          <path d="M470 183l40 4 40 9-22 1zM600 206l40 3 30 8-30 0z" fill={C.c} />
          <path d="M625 206l195 35-40 7-120-24-56-13 50 2z" fill={C.b} />
          <path d="M660 213l160 28-40 7-80-17 44 2z" fill={C.n} />
          <path d="M700 229l34 1 26 6-30 2z" fill={C.a} />
          <path d="M344 157l18 2 12 4-20-2zM472 181l20 3 8 3-20-3z" fill={C.t} />
          <!-- bottom flange -->
          <path d="M160 192L640 308 799 346 779 356 160 198z" fill={C.c} />
          <path d="M160 191l80 19 50 19-30-5-100-26z" fill={C.a} />
          <path d="M160 191l60 15 18 8-78-17z" fill={C.b} />
          <path d="M346 240l10 0 8 4-8 1z" fill={C.t} />
          <path d="M570 292l80 18 149 34-20 12-150-38z" fill={C.a} />
          <path d="M660 312l60 12 79 20-20 12-90-24-50-16z" fill={C.b} />
          <path d="M700 332l50 7 49 5-20 12z" fill={C.n} />
          <path d="M715 335l20 1 30 9-14 1z" fill={C.a} />
          <g stroke="#e2e2f2" stroke-width=".8" fill="none" stroke-dasharray="7 4">
            <path d="M160 126L800 244M160 129.500L780 247M160 195L779 351M160 191L640 311 790 348" />
          </g>
          <g stroke="#b9a9a0" stroke-width=".6" fill="none" stroke-dasharray="6 3">
            <path d="M160 134L795 256M160 183L795 341" />
          </g>
        </g>
        {#each holes as h, n}
          <polygon points={pts(n ? h : [[160, 137], ...h.slice(2, 5), [160, 183]])} fill="#fdfdfd" stroke="#155" stroke-width=".7" stroke-dasharray="3 1" />
          {#if n > 6 && n < 12}<polygon points={pts([h[0], h[1], h[5]])} fill={C.n} /><path d="M{h[1]}L{h[0]}L{h[5]}" fill="none" stroke="#00b8c8" stroke-width=".8" />{/if}
          {#each h.slice(n ? 0 : 2, n ? 6 : 5) as [x, y]}<circle cx={x} cy={y} r="1" fill="#0c2a4a" />{/each}
        {/each}
        {#each ribs as [x, y, hgt]}
          <path d="M{x} {y}l14 2.500v{hgt - 4}l-14 2z" fill={C.n} />
          <path d="M{x + .5} {y}v{hgt}M{x + 13.5} {y + 3}v{hgt - 5}" stroke="#c9b6e0" stroke-width="1" stroke-dasharray="5 2" />
          <path d="M{x + 5} {y + hgt - 10}l6-1v7l-6 1z" fill="none" stroke="#9b9bb8" stroke-width=".6" />
          <path d="M{x} {y + hgt}l13-2" stroke="#b8a8d8" stroke-width=".7" stroke-dasharray="3 1" />
          <circle cx={x} cy={y} r="1" fill="#123" /><circle cx={x} cy={y + hgt} r="1" fill="#123" /><circle cx={x + 14} cy={y + hgt - 2} r="1" fill="#123" /><circle cx={x + 14} cy={y - 1} r="1" fill="#123" /><circle cx={x + 27} cy={y - 2} r="1" fill="#123" />
        {/each}
        <path d="M160 159L799 299" stroke="#666" stroke-width=".7" />
        <circle cx="192" cy="166" r="1" fill="#29f" /><circle cx="394" cy="210" r="1" fill="#29f" /><circle cx="717" cy="280" r="1" fill="#29f" />
        <circle cx="162" cy="122" r="1.200" fill="#123" />
        <!-- end section and support -->
        <path d="M793 254v92" stroke="#999" stroke-width=".6" stroke-dasharray="5 2" />
        <path d="M792 325h8v26l-8-2z" fill={C.n} opacity=".7" />
        <g fill="none" stroke="#ff20e8" stroke-width="1">
          <path d="M800 244v54" stroke-width="1.300" />
          <path d="M777 247L820 242M820 242L799 298 782 247M799 298L817 348M799 298L779 354M779 354L817 348" stroke-dasharray="6 2" />
        </g>
        <g fill="#28cf1e" opacity=".82">
          <path d="M780 301l36-5c6 2 6 14 1 17l-38 7c-5-4-4-16 1-19z" />
          <path d="M783 307l30-1 14 22-54-4z" fill="#43dd3a" />
          <path d="M790 327h16v20c-4 3-12 3-16 0z" />
          <path d="M160 156l3 1 3 20-6-1z" />
        </g>
        <circle cx="799" cy="298" r="1.300" fill="#f33" />
        {#each [[820, 242], [817, 348], [779, 354], [799, 351]] as [x, y]}<circle cx={x} cy={y} r="1.200" fill="#15305a" />{/each}
        <!-- view cube -->
        <g stroke="#555" stroke-width=".7" stroke-linejoin="round">
          <path d="M784 71l29-5 23 5-30 6z" fill="#8b8b8e" />
          <path d="M784 71l22 6 1 35-22-6z" fill="#b6b6b8" />
          <path d="M806 77l30-6-.5 36-28.500 5z" fill="#cbcbcd" />
          <path d="M790 73v35M800 75v35M784 79l22 6M785 99l22 6M814 75v35M828 73v35M806 85l30-4M807 103l28.500-4" fill="none" />
        </g>
        <ellipse cx="811" cy="71" rx="5" ry="1.500" fill="#55557a" opacity=".6" />
        <text x="792" y="94" font-size="6" font-weight="700" fill="#2f9a3c">-Y</text>
        <text x="816" y="96" font-size="7" font-weight="700" fill="#d8272a">-X</text>
        <!-- axis triad -->
        <path d="M191 502L178 504" stroke="#00dd10" stroke-width="1.500" /><path d="M173 504l6-2.500v5z" fill="#00dd10" />
        <path d="M191 502l8 2" stroke="#e80000" stroke-width="1.500" /><path d="M204 505.500l-6-4-1 5z" fill="#e80000" />
        <path d="M191 502v15" stroke="#00008c" stroke-width="1.600" /><path d="M191 522l-2.500-6h5z" fill="#00008c" />
        <circle cx="191" cy="502" r="1.800" fill="#e8e000" />
        <text x="167" y="507" font-size="6" fill="#00c010">Y</text><text x="204" y="508" font-size="6" fill="#e80000">X</text><text x="189" y="531" font-size="6" fill="#1c1c8c">Z</text>
        <path d="M242 103v9l2-2 1.500 3 1.200-.6-1.400-2.900h2.700z" fill="#fff" stroke="#333" stroke-width=".7" />
      </svg>
      <div class="info">
        <p>Zichtbaarheidsmodus</p>
        <p>BG2 - RB</p>
        <p>Statische Berekening</p>
        <p>Equivalente Spanningen Von Mises σ<sub>eqv,Mises,Max</sub> [N/mm<sup>2</sup>]</p>
      </div>
      <p class="minmax">max σ<sub>eqv,Mises,Max</sub> : 191.09 | min σ<sub>eqv,Mises,Max</sub> : 1.02 N/mm<sup>2</sup></p>
    </main>

    <aside class="ctl">
      <div class="cap"><h2>Controlepaneel</h2>{@render panelButtons()}</div>
      <p class="what">Vlakken | Spanningen | Equivalente Spanningen | σ<sub>eqv,Mises</sub><br />σ<sub>eqv,Mises,Max</sub> [N/mm<sup>2</sup>]</p>
      <div class="scale">
        <ul class="lims">{#each limits as l}<li>{l}</li>{/each}</ul>
        <ul class="cols">{#each bands as [c]}<li style="background:{c}"></li>{/each}</ul>
        <ul class="pct">{#each bands as [, p]}<li>{p}</li>{/each}</ul>
        <div class="slide">
          <input type="range" aria-label="Bovengrens" min="0" max="100" value="100" />
          <input type="range" aria-label="Ondergrens" min="0" max="100" value="0" />
        </div>
      </div>
      <div class="foot">
        <button aria-label="Opties">{@render icon('hand')}</button>
        <button class="sel" aria-label="Kleurenschaal">{@render icon('bars')}</button>
      </div>
      <div class="tabs">
        <button class="cur" aria-label="Kleuren">{@render icon('scaletab')}</button>
        <button aria-label="Factoren">{@render icon('balance')}</button>
        <button aria-label="Filter">{@render icon('factor')}</button>
      </div>
    </aside>
  </div>

  <footer class="status">
    <button>SNAP</button><button>RASTER</button><button>LGRID</button><button>OSNAP</button>
    <span class="mode">Zichtbaarheidsmodus</span>
    <span class="void"></span>
    <span class="cs">CS: Globaal XYZ</span>
    <span class="wp">Werkvlak: XZ</span>
    <span class="co">X: 5.564 m</span>
    <span class="co">Y: 0.000 m</span>
    <span class="co">Z: 2.559 m</span>
  </footer>
</div>

<style>
  :global(body) { margin: 0; }
  .app { display: flex; flex-direction: column; height: 100vh; overflow: hidden; background: #f7f7f7; color: #111; font: 6px/8px "Open Sans", "Noto Sans", sans-serif; }
  h1, h2, p, ul { margin: 0; padding: 0; font: inherit; list-style: none; }
  button { font: inherit; color: inherit; background: none; border: 0; padding: 0; margin: 0; flex: none; }
  button svg { display: block; }
  .ic { width: 11px; height: 11px; flex: none; display: block; }

  .title { height: 12px; flex: none; display: flex; align-items: center; gap: 3px; padding-left: 1px; background: #fff; }
  .title .ic { width: 8px; height: 8px; }
  .title h1 { flex: 1; }
  .wins { display: flex; gap: 16px; padding-right: 7px; }
  .wins svg { width: 8px; height: 8px; }

  .menu { height: 12px; flex: none; display: flex; align-items: center; gap: 8px; }
  .menu > .ic { width: 8px; height: 8px; margin-right: -4px; }
  .licence { margin-left: auto; white-space: nowrap; margin-right: -3px; }
  .pb svg { width: 6px; height: 6px; }
  .menu .pb { margin-right: -4px; }
  .menu .pb:last-child { margin-right: 1px; }

  .bar { height: 14px; flex: none; display: flex; align-items: center; border-top: 1px solid #f1f1f1; box-sizing: border-box; }
  .bar + .bar { height: 15px; }
  .tool { width: 14px; height: 13px; display: grid; place-items: center; border: 1px solid transparent; box-sizing: border-box; }
  .tool.on { background: #c8e2f8; border-color: #b4d8f6; }
  .caret { width: 6px; height: 12px; display: grid; place-items: center; }
  .caret::before { content: ''; border: 2px solid transparent; border-top-color: #222; border-bottom: 0; }
  .sep, .grip { height: 10px; flex: none; box-sizing: border-box; }
  .grip { background: radial-gradient(#bbb 1px, transparent 1px) center / 2px 3px repeat-y; }
  .sep { background: linear-gradient(#ddd, #ddd) center / 1px 10px no-repeat; }
  .combo { display: flex; align-items: center; height: 11px; background: #e9e9f4; overflow: hidden; white-space: nowrap; box-sizing: border-box; }
  .sw { width: 6px; height: 6px; background: #ccffff; margin-right: 1px; }
  .case { width: 159px; margin: 0 1px 0 2px; padding-left: 2px; background: linear-gradient(90deg, #e9e9f4 142px, #f7f7f7 142px); }
  .case b { width: 16px; height: 8px; margin: 0 3px 0 1px; background: #555; color: #fff; text-align: center; font-weight: 400; }
  .case .bg { width: 18px; }
  .coord { width: 107px; margin: 0 1px 0 0; padding-left: 4px; }
  .coord .sw { margin-right: 3px; }
  .drop { margin-left: auto; width: 9px; }
  .chev { width: 6px; height: 6px; display: block; }
  .step { width: 8px; height: 11px; font-size: 6px; line-height: 10px; text-align: center; }

  .work { flex: 1; display: flex; min-height: 0; }
  .cap { height: 11px; flex: none; display: flex; align-items: center; gap: 5px; padding: 0 3px; background: #d9e6f3; }
  .cap h2 { flex: 1; font-weight: 600; color: #222c3c; }
  .nav { width: 159px; flex: none; display: flex; flex-direction: column; background: #fff; border-left: 1px solid #d8d8e0; border-right: 3px solid #e3e5ee; box-sizing: border-box; }
  .calc { flex: none; margin: 3px 1px 4px 2px; padding-left: 2px; gap: 3px; }
  .calc .ic { width: 8px; height: 8px; }
  .calc .step { margin-left: -3px; width: 10px; }
  .calc .drop { margin-right: 2px; }
  .grey { background: #d6d6dc; }
  .tree { display: grid; grid-auto-rows: 1fr; }
  .tree.top { height: 184px; border-top: 1px solid #eee; }
  .tree.bottom { height: 116px; margin-top: auto; padding-top: 2px; border-top: 1px solid #ddd; margin-bottom: 31px; }
  .tree li { display: flex; align-items: center; gap: 2px; padding-left: 2px; white-space: nowrap; min-height: 0; }
  .tree li.deep { padding-left: 12px; }
  .tw { width: 8px; flex: none; }
  .tree label { display: flex; align-items: center; }
  .tree .ic { width: 9px; height: 9px; margin: 0 2px 0 2px; }
  .tree small { font-size: 5px; }
  .tree input { appearance: none; width: 8px; height: 8px; margin: 0; flex: none; display: grid; place-items: center; border: 1px solid #777; background: #fff; box-sizing: border-box; }
  .tree input[type='radio'] { border-radius: 50%; }
  .tree input[type='radio']:checked { background: radial-gradient(#222 0 2px, #fff 2px); }
  .tree input[type='checkbox']:checked::before { content: ''; width: 6px; height: 6px; background: #333; clip-path: polygon(0 45%, 15% 35%, 40% 65%, 85% 5%, 100% 15%, 42% 95%); }
  .tree input.blue { background: #cfe8fb; border-color: #5f9cc8; }
  .tabs { height: 14px; flex: none; display: flex; background: #f7f7f7; }
  .tabs button { width: 20px; display: grid; place-items: center; background: #ececf0; border: 1px solid #d8d8de; border-left-width: 0; box-sizing: border-box; }
  .tabs .cur { background: #fff; border-top-color: #fff; }
  .tabs .ic { width: 9px; height: 9px; }

  .view { flex: 1; min-width: 0; position: relative; background: #fdfdfd; overflow: hidden; font-size: 6px; line-height: 9px; }
  .scene { position: absolute; inset: 0; width: 100%; height: 100%; font-family: "Open Sans", sans-serif; }
  .info { position: relative; padding: 3px; }
  .view sub, .view sup { font-size: 6px; line-height: 0; }
  .minmax { position: absolute; left: 3px; bottom: 2px; }

  .ctl { width: 176px; flex: none; display: flex; flex-direction: column; border: 0 solid #dcdce4; border-width: 0 1px 0 1px; box-sizing: border-box; }
  .what { height: 23px; padding: 3px 5px 0; background: #fff; line-height: 8px; box-sizing: border-box; white-space: nowrap; }
  .what sub, .what sup { font-size: 4px; line-height: 0; }
  .scale { display: flex; margin: 10px 0 0 40px; height: 152px; }
  .scale ul { display: grid; grid-auto-rows: 1fr; flex: none; text-align: right; align-items: center; }
  .scale .lims { width: 22px; margin: -7px 7px -7px 0; }
  .scale .cols { width: 22px; align-items: stretch; row-gap: 1px; }
  .scale .pct { width: 28px; }
  .slide { position: relative; width: 12px; margin: -4px 0 -3px 2px; background: linear-gradient(#dedede, #dedede) center / 2px 100% no-repeat; }
  .slide input { appearance: none; position: absolute; inset: 0; width: 12px; height: 100%; margin: 0; background: none; writing-mode: vertical-lr; direction: rtl; pointer-events: none; }
  .slide input::-webkit-slider-thumb { appearance: none; width: 12px; height: 6px; background: #0078d7; pointer-events: auto; }
  .foot { margin-top: auto; height: 18px; flex: none; display: flex; gap: 3px; align-items: center; justify-content: flex-end; padding-right: 3px; background: #fff; }
  .foot button { width: 14px; height: 13px; display: grid; place-items: center; background: #cfe4f7; border: 1px solid #cfe4f7; box-sizing: border-box; }
  .foot .sel { border-color: #3f8fd0; }

  .status { height: 12px; flex: none; display: flex; align-items: center; justify-content: flex-end; white-space: nowrap; background: #f3f3f3; }
  .status button { height: 9px; margin-right: 2px; padding: 0 1px; background: #e6e6e6; border: 0 solid #cfcfcf; border-width: 1px 0 0 1px; line-height: 8px; box-sizing: border-box; }
  .status span { height: 10px; line-height: 10px; border-right: 1px solid #ddd; box-sizing: border-box; padding-left: 2px; flex: none; }
  .mode { width: 66px; }
  .void { width: 58px; }
  .cs { width: 83px; }
  .wp { width: 39px; }
  .co { width: 40px; }
</style>
